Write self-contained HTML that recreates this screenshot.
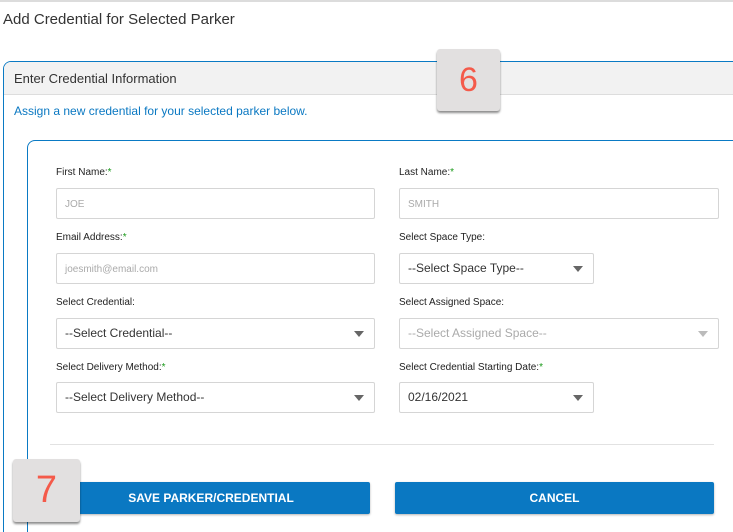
<!DOCTYPE html>
<html><head><meta charset="utf-8"><style>
*{box-sizing:border-box;margin:0;padding:0}
html,body{width:733px;height:532px;overflow:hidden;background:#fff}
body{font-family:"Liberation Sans",sans-serif;color:#333}
#w{position:relative;width:733px;height:532px;overflow:hidden}
.a{position:absolute}
.lab{position:absolute;font-size:10px;color:#222}
.lab b{color:#1a9a1a;font-weight:normal}
.in{position:absolute;height:31px;border:1px solid #d5d5d5;border-radius:2px;background:#fff;font-size:12px;padding-left:8px;line-height:29px;color:#333}
.ph{color:#aaa;font-size:10px}
.in .ar{position:absolute;right:10px;top:12px;width:0;height:0;border-left:5px solid transparent;border-right:5px solid transparent;border-top:6px solid #666}
.btn{position:absolute;top:482px;height:32px;background:#0a78c2;color:#fff;font-size:12px;font-weight:bold;text-align:center;line-height:32px;border-radius:2px;box-shadow:0 1px 2px rgba(0,0,0,.3)}
.badge{position:absolute;background:#e2e0e0;border-radius:3px;box-shadow:0 2px 2px rgba(0,0,0,.45);color:#f45a4a;font-size:34px;text-align:center}
</style></head><body><div id="w">
<div class="a" style="left:0;top:0;width:733px;height:2px;background:#dcdcdc"></div>
<div class="a" style="left:3px;top:11px;font-size:15px;color:#333">Add Credential for Selected Parker</div>
<div class="a" style="left:3px;top:61px;width:730px;height:471px;border:1px solid #0a7ac4;border-right:none;border-bottom:none;border-radius:8px 0 0 0;overflow:hidden">
<div style="height:33px;background:#f2f2f2;border-bottom:1px solid #ddd;font-size:13px;padding:9px 0 0 10px;color:#333">Enter Credential Information</div>
</div>
<div class="a" style="left:14px;top:104px;font-size:12px;color:#0a78c2">Assign a new credential for your selected parker below.</div>
<div class="a" style="left:27px;top:140px;width:706px;height:392px;border:1px solid #0a7ac4;border-right:none;border-bottom:none;border-radius:8px 0 0 0"></div>

<div class="lab" style="left:56px;top:167px">First Name:<b>*</b></div>
<div class="in" style="left:56px;top:188px;width:319px"><span class="ph">JOE</span></div>
<div class="lab" style="left:399px;top:167px">Last Name:<b>*</b></div>
<div class="in" style="left:399px;top:188px;width:320px"><span class="ph">SMITH</span></div>

<div class="lab" style="left:56px;top:232px">Email Address:<b>*</b></div>
<div class="in" style="left:56px;top:253px;width:319px"><span class="ph">joesmith@email.com</span></div>
<div class="lab" style="left:399px;top:232px">Select Space Type:</div>
<div class="in" style="left:399px;top:253px;width:195px">--Select Space Type--<i class="ar"></i></div>

<div class="lab" style="left:56px;top:297px">Select Credential:</div>
<div class="in" style="left:56px;top:318px;width:319px">--Select Credential--<i class="ar"></i></div>
<div class="lab" style="left:399px;top:297px">Select Assigned Space:</div>
<div class="in" style="left:399px;top:318px;width:320px;color:#aaa">--Select Assigned Space--<i class="ar" style="border-top-color:#bbb"></i></div>

<div class="lab" style="left:56px;top:362px">Select Delivery Method:<b>*</b></div>
<div class="in" style="left:56px;top:382px;width:319px">--Select Delivery Method--<i class="ar"></i></div>
<div class="lab" style="left:399px;top:362px">Select Credential Starting Date:<b>*</b></div>
<div class="in" style="left:399px;top:382px;width:195px">02/16/2021<i class="ar"></i></div>

<div class="a" style="left:50px;top:444px;width:664px;height:1px;background:#e2e2e2"></div>
<div class="btn" style="left:52px;width:318px">SAVE PARKER/CREDENTIAL</div>
<div class="btn" style="left:395px;width:319px">CANCEL</div>

<div class="badge" style="left:437px;top:49px;width:63px;height:62px;line-height:62px">6</div>
<div class="badge" style="left:13px;top:459px;width:67px;height:63px;line-height:63px;font-size:38px">7</div>
</div></body></html>
